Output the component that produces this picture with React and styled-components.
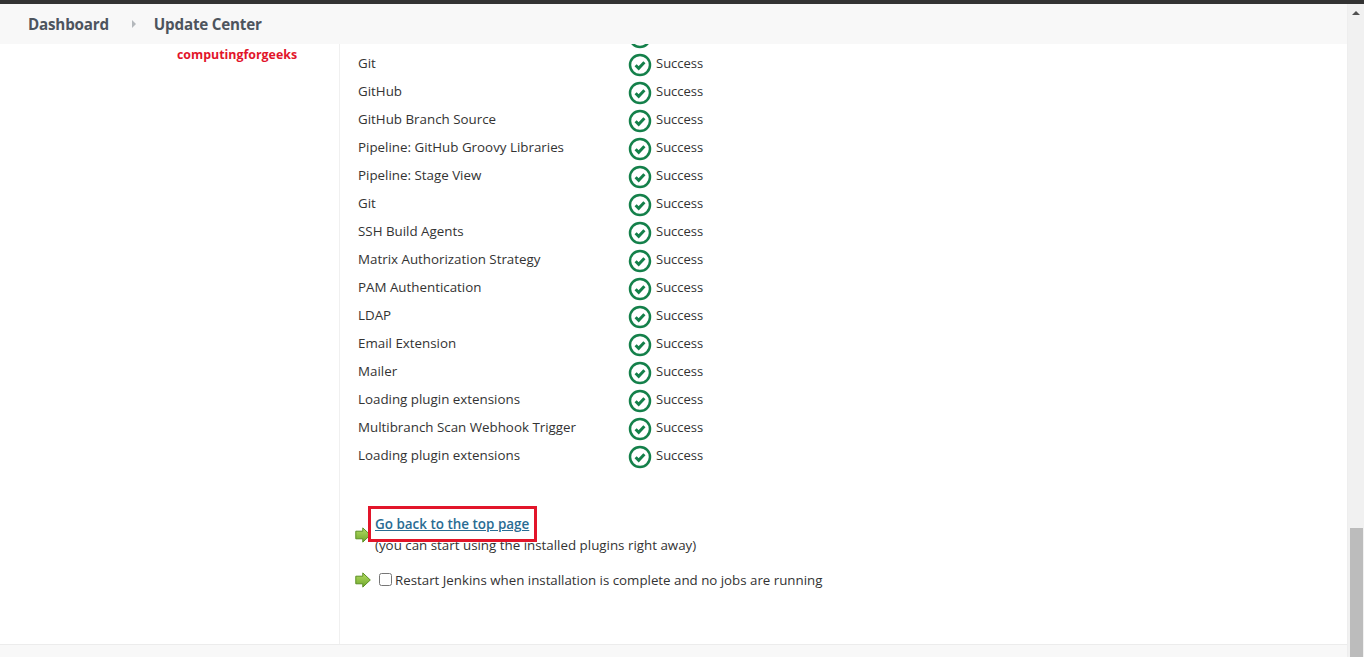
import React from "react";
import styled, { createGlobalStyle } from "styled-components";

const plugins = [
  "Git",
  "GitHub",
  "GitHub Branch Source",
  "Pipeline: GitHub Groovy Libraries",
  "Pipeline: Stage View",
  "Git",
  "SSH Build Agents",
  "Matrix Authorization Strategy",
  "PAM Authentication",
  "LDAP",
  "Email Extension",
  "Mailer",
  "Loading plugin extensions",
  "Multibranch Scan Webhook Trigger",
  "Loading plugin extensions",
];

const GlobalStyle = createGlobalStyle`
  html, body {
    margin: 0;
    height: 100%;
    overflow: hidden;
    background: #fff;
  }
  body {
    font-family: "Open Sans", "Noto Sans", "Liberation Sans", sans-serif;
    font-size: 13.35px;
    color: #333;
  }
  * {
    box-sizing: border-box;
  }
`;

const Page = styled.div`
  height: 657px;
  display: flex;
  flex-direction: column;
`;

const TopStrip = styled.div`
  height: 4px;
  flex: none;
  background: #333;
`;

const Frame = styled.div`
  flex: 1;
  min-height: 0;
  display: flex;
`;

const Content = styled.div`
  flex: 1;
  min-width: 0;
  display: flex;
  flex-direction: column;
`;

const Breadcrumbs = styled.nav`
  position: relative;
  z-index: 1;
  height: 40px;
  flex: none;
  display: flex;
  align-items: center;
  padding-left: 28px;
  background: #f8f8f8;
  font-size: 15.2px;
  font-weight: 700;
  letter-spacing: -0.2px;
  color: #4d545d;
`;

const Caret = styled.span`
  width: 0;
  height: 0;
  margin: 0 18px 0 23px;
  border-left: 4px solid #b4b8bc;
  border-top: 4px solid transparent;
  border-bottom: 4px solid transparent;
`;

const Body = styled.div`
  flex: 1;
  min-height: 0;
  display: flex;
  overflow: hidden;
`;

const Sidebar = styled.aside`
  width: 340px;
  flex: none;
  padding: 3px 0 0 177px;
  border-right: 1px solid #f0f0f0;
`;

const Watermark = styled.div`
  font-size: 12.4px;
  font-weight: 700;
  line-height: 15px;
  color: #e2152a;
`;

const Main = styled.main`
  flex: 1;
  padding-left: 15px;
`;

const PluginList = styled.div`
  margin-top: -23px;
  padding-left: 3px;
`;

const PluginRow = styled.div`
  height: 28px;
  display: grid;
  grid-template-columns: 270px 28px auto;
  align-items: center;
  line-height: 28px;
`;

const Status = styled.span`
  font-size: 13px;
`;

const SuccessIcon = styled.svg`
  width: 24px;
  height: 24px;
  margin-top: 4px;
`;

const Actions = styled.div`
  margin-top: 45px;
  display: flex;
  flex-direction: column;
  gap: 15px;
`;

const Action = styled.div`
  display: flex;
  align-items: center;
  gap: 4px;
`;

const ArrowIcon = styled.svg`
  width: 16px;
  height: 16px;
  flex: none;
`;

const ActionText = styled.div`
  line-height: 21px;
`;

const HighlightedLink = styled.a`
  position: relative;
  display: inline-block;
  font-size: 13.45px;
  font-weight: 600;
  color: #2a6c93;
  text-decoration: underline;
  cursor: pointer;
  &::after {
    content: "";
    position: absolute;
    top: -8px;
    bottom: -7px;
    left: -7px;
    right: -8px;
    border: 3px solid #e2152a;
  }
`;

const Hint = styled.div`
  line-height: 21px;
`;

const CheckLabel = styled.label`
  display: flex;
  align-items: center;
  padding-left: 4px;
  font-size: 13.3px;
`;

const Checkbox = styled.input`
  width: 13px;
  height: 13px;
  margin: 0 3px 2px 0;
`;

const Footer = styled.footer`
  height: 13px;
  flex: none;
  background: #f8f8f8;
  border-top: 1px solid #ececec;
`;

const Scrollbar = styled.div`
  width: 17px;
  flex: none;
  display: flex;
  flex-direction: column;
  align-items: center;
  background: #f1f1f1;
  border-left: 1px solid #eeeeee;
`;

const ScrollArrow = styled.span`
  margin-top: 7px;
  width: 0;
  height: 0;
  border-left: 4px solid transparent;
  border-right: 4px solid transparent;
  border-bottom: 4px solid #505050;
`;

const ScrollThumb = styled.div`
  margin-top: auto;
  width: 13px;
  height: 129px;
  background: #bcbcbc;
`;

const Success = () => (
  <SuccessIcon viewBox="0 0 24 24" fill="none" stroke="#14804a">
    <circle cx="12" cy="12" r="10" strokeWidth="2.5" />
    <path d="M7.6 12.2l3.1 3.1 5.7-6" strokeWidth="3" />
  </SuccessIcon>
);

const Arrow = () => (
  <ArrowIcon viewBox="0 0 16 16">
    <defs>
      <linearGradient id="arrowFill" x1="0" y1="0" x2="0" y2="1">
        <stop offset="0" stopColor="#b4dc62" />
        <stop offset="1" stopColor="#6fa82c" />
      </linearGradient>
    </defs>
    <path
      d="M.8 4.2h7V.9L15.3 8l-7.5 7.1v-3.3h-7z"
      fill="url(#arrowFill)"
      stroke="#5b8f22"
    />
  </ArrowIcon>
);

export default function App() {
  return (
    <>
      <GlobalStyle />
      <Page>
        <TopStrip />
        <Frame>
          <Content>
            <Breadcrumbs>
              Dashboard
              <Caret />
              Update Center
            </Breadcrumbs>
            <Body>
              <Sidebar>
                <Watermark>computingforgeeks</Watermark>
              </Sidebar>
              <Main>
                <PluginList>
                  {/* row scrolled under the breadcrumb bar, only its icon peeks out */}
                  <PluginRow>
                    <span />
                    <Success />
                  </PluginRow>
                  {plugins.map((name, i) => (
                    <PluginRow key={i}>
                      <span>{name}</span>
                      <Success />
                      <Status>Success</Status>
                    </PluginRow>
                  ))}
                </PluginList>
                <Actions>
                  <Action>
                    <Arrow />
                    <ActionText>
                      <HighlightedLink>Go back to the top page</HighlightedLink>
                      <Hint>(you can start using the installed plugins right away)</Hint>
                    </ActionText>
                  </Action>
                  <Action>
                    <Arrow />
                    <CheckLabel>
                      <Checkbox type="checkbox" />
                      Restart Jenkins when installation is complete and no jobs are running
                    </CheckLabel>
                  </Action>
                </Actions>
              </Main>
            </Body>
            <Footer />
          </Content>
          <Scrollbar>
            <ScrollArrow />
            <ScrollThumb />
          </Scrollbar>
        </Frame>
      </Page>
    </>
  );
}
